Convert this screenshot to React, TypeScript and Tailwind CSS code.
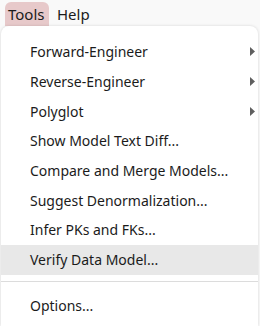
import React from "react";

const items: { label: string; sub?: boolean; active?: boolean }[] = [
  { label: "Forward-Engineer", sub: true },
  { label: "Reverse-Engineer", sub: true },
  { label: "Polyglot", sub: true },
  { label: "Show Model Text Diff..." },
  { label: "Compare and Merge Models..." },
  { label: "Suggest Denormalization..." },
  { label: "Infer PKs and FKs..." },
  { label: "Verify Data Model...", active: true },
];

function Arrow() {
  return (
    <svg width="5" height="9" viewBox="0 0 5 9" className="shrink-0">
      <path d="M0 0 L5 4.5 L0 9 Z" fill="#5f5f5f" />
    </svg>
  );
}

export default function App() {
  return (
    <div
      className="w-[260px] h-[326px] overflow-hidden bg-[#f9f9f9] text-[#1b1b1b] flex flex-col"
      style={{ fontFamily: '"Noto Sans", "Open Sans", sans-serif' }}
    >
      <div className="h-[26px] flex items-end pl-[5px] text-[15px] shrink-0">
        <div className="h-[24px] w-[44px] pl-[3px] rounded-t-[6px] bg-[#e7c9ca] flex items-center">Tools</div>
        <div className="h-[24px] pl-[8px] flex items-center">Help</div>
      </div>
      <div className="flex-1 ml-[1px] mr-[2px] bg-white rounded-t-[8px] shadow-[0_0_3px_rgba(0,0,0,0.15)] pt-[11px] text-[14px]">
        {items.map((it) => (
          <div
            key={it.label}
            className={`h-[29.7px] flex items-center pl-[29px] pr-[3px] ${it.active ? "bg-[#e8e8e8]" : ""}`}
          >
            <span className="flex-1 whitespace-nowrap">{it.label}</span>
            {it.sub && <Arrow />}
          </div>
        ))}
        <div className="h-[14px] flex items-center">
          <div className="h-[1px] w-full bg-[#dcdcdc]" />
        </div>
        <div className="h-[29.7px] flex items-center pl-[29px] pt-[4px]">Options...</div>
      </div>
    </div>
  );
}
